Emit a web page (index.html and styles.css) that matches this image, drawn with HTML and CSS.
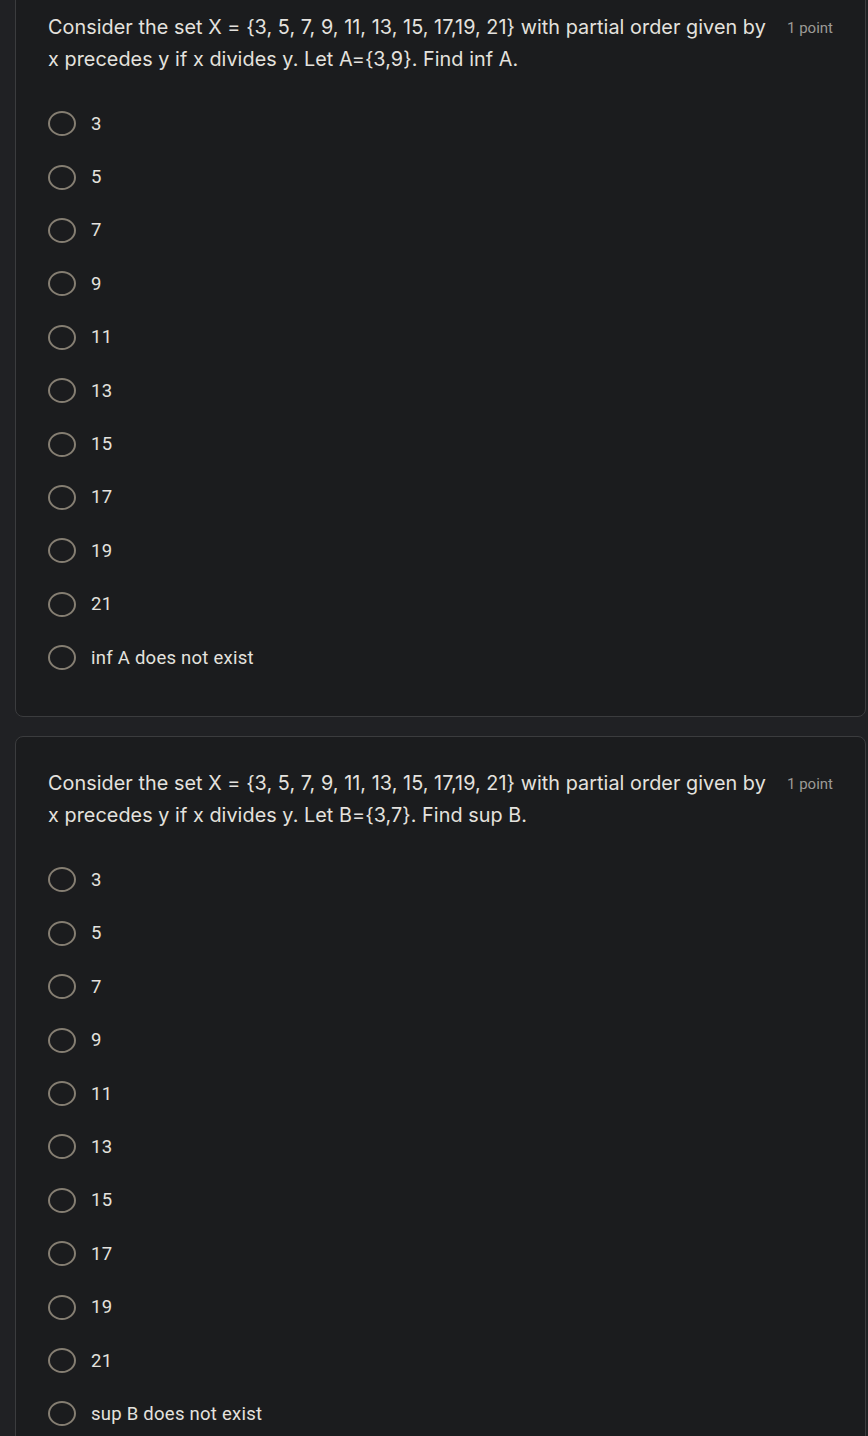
FILE: index.html
```html
<!DOCTYPE html>
<html>
<head>
<meta charset="utf-8">
<link rel="stylesheet" href="styles.css">
</head>
<body>
<div class="page">
  <div class="card card-first">
    <div class="head">
      <div class="question">Consider the set X = {3, 5, 7, 9, 11, 13, 15, 17,19, 21} with partial order given by x precedes y if x divides y. Let A={3,9}. Find inf A.</div>
      <div class="points">1 point</div>
    </div>
    <div class="options">
      <div class="opt"><span class="radio"></span><span class="label">3</span></div>
      <div class="opt"><span class="radio"></span><span class="label">5</span></div>
      <div class="opt"><span class="radio"></span><span class="label">7</span></div>
      <div class="opt"><span class="radio"></span><span class="label">9</span></div>
      <div class="opt"><span class="radio"></span><span class="label">11</span></div>
      <div class="opt"><span class="radio"></span><span class="label">13</span></div>
      <div class="opt"><span class="radio"></span><span class="label">15</span></div>
      <div class="opt"><span class="radio"></span><span class="label">17</span></div>
      <div class="opt"><span class="radio"></span><span class="label">19</span></div>
      <div class="opt"><span class="radio"></span><span class="label">21</span></div>
      <div class="opt"><span class="radio"></span><span class="label">inf A does not exist</span></div>
    </div>
  </div>
  <div class="card">
    <div class="head">
      <div class="question">Consider the set X = {3, 5, 7, 9, 11, 13, 15, 17,19, 21} with partial order given by x precedes y if x divides y. Let B={3,7}. Find sup B.</div>
      <div class="points">1 point</div>
    </div>
    <div class="options">
      <div class="opt"><span class="radio"></span><span class="label">3</span></div>
      <div class="opt"><span class="radio"></span><span class="label">5</span></div>
      <div class="opt"><span class="radio"></span><span class="label">7</span></div>
      <div class="opt"><span class="radio"></span><span class="label">9</span></div>
      <div class="opt"><span class="radio"></span><span class="label">11</span></div>
      <div class="opt"><span class="radio"></span><span class="label">13</span></div>
      <div class="opt"><span class="radio"></span><span class="label">15</span></div>
      <div class="opt"><span class="radio"></span><span class="label">17</span></div>
      <div class="opt"><span class="radio"></span><span class="label">19</span></div>
      <div class="opt"><span class="radio"></span><span class="label">21</span></div>
      <div class="opt"><span class="radio"></span><span class="label">sup B does not exist</span></div>
    </div>
  </div>
</div>
</body>
</html>
```

FILE: styles.css
```css
html, body {
  margin: 0;
  padding: 0;
  background: #202124;
  height: 100%;
  overflow: hidden;
}
.page {
  padding: 0 2px 0 15px;
  display: flex;
  flex-direction: column;
  gap: 19px;
}
.card {
  background: #1b1c1e;
  border: 1px solid #3b3c3e;
  border-radius: 8px;
  padding: 30px 32px 32px 32px;
}
.card-first {
  margin-top: -20px;
}
.head {
  display: flex;
  align-items: flex-start;
}
.question {
  flex: 1;
  font-family: "Inter", "Open Sans", sans-serif;
  font-size: 19.8px;
  line-height: 32px;
  color: #e4e2de;
  letter-spacing: 0.06px;
  max-width: 722px;
}
.points {
  margin-left: auto;
  padding-left: 20px;
  font-family: "Roboto", sans-serif;
  font-size: 15px;
  line-height: 32px;
  color: #9c9a96;
  white-space: nowrap;
  padding-top: 1px;
}
.options {
  margin-top: 22px;
  display: flex;
  flex-direction: column;
}
.opt {
  height: 53.4px;
  display: flex;
  align-items: center;
}
.radio {
  width: 24px;
  height: 21px;
  border: 2px solid #857e72;
  border-radius: 50%;
  flex: none;
}
.label {
  margin-left: 15px;
  font-family: "Roboto", sans-serif;
  font-size: 18.5px;
  letter-spacing: 0.25px;
  color: #e4e2de;
}
```
